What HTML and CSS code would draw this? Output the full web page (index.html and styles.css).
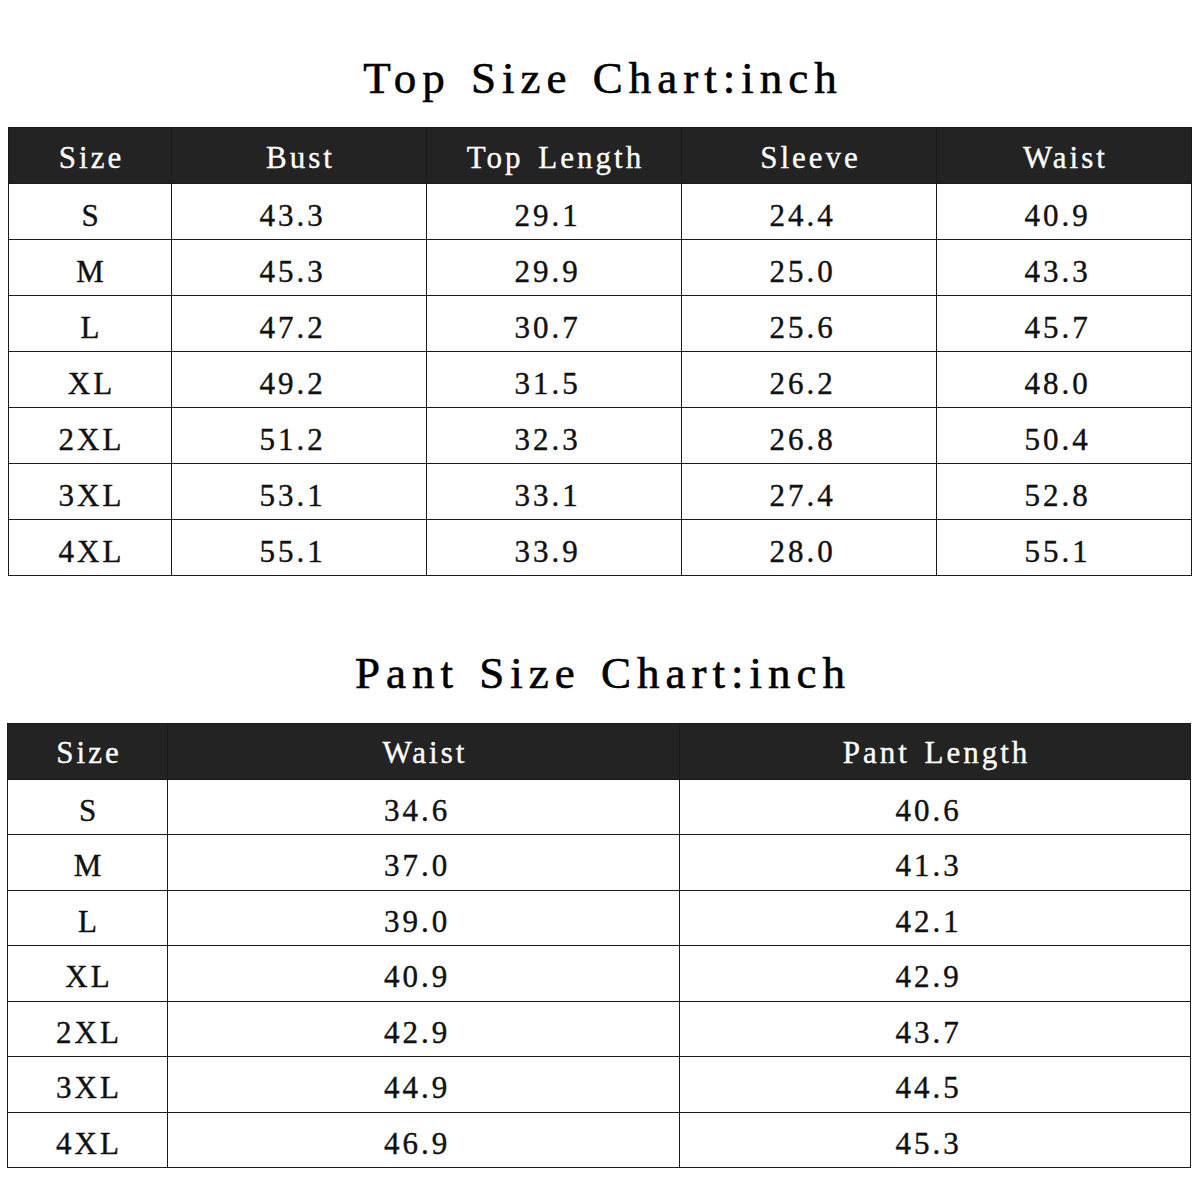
FILE: index.html
```html
<!DOCTYPE html>
<html>
<head>
<meta charset="utf-8">
<link rel="stylesheet" href="styles.css">
</head>
<body>
<section class="chart chart-top">
  <h1 class="title">Top Size Chart:inch</h1>
  <table class="grid grid-top">
    <colgroup><col class="c-size"><col><col><col><col></colgroup>
    <thead>
      <tr><th>Size</th><th>Bust</th><th>Top Length</th><th>Sleeve</th><th>Waist</th></tr>
    </thead>
    <tbody>
      <tr><td class="sz">S</td><td>43.3</td><td>29.1</td><td>24.4</td><td>40.9</td></tr>
      <tr><td class="sz">M</td><td>45.3</td><td>29.9</td><td>25.0</td><td>43.3</td></tr>
      <tr><td class="sz">L</td><td>47.2</td><td>30.7</td><td>25.6</td><td>45.7</td></tr>
      <tr><td class="sz">XL</td><td>49.2</td><td>31.5</td><td>26.2</td><td>48.0</td></tr>
      <tr><td class="sz">2XL</td><td>51.2</td><td>32.3</td><td>26.8</td><td>50.4</td></tr>
      <tr><td class="sz">3XL</td><td>53.1</td><td>33.1</td><td>27.4</td><td>52.8</td></tr>
      <tr><td class="sz">4XL</td><td>55.1</td><td>33.9</td><td>28.0</td><td>55.1</td></tr>
    </tbody>
  </table>
</section>
<section class="chart chart-pant">
  <h1 class="title">Pant Size Chart:inch</h1>
  <table class="grid grid-pant">
    <colgroup><col class="c-size-p"><col class="c-half"><col></colgroup>
    <thead>
      <tr><th>Size</th><th>Waist</th><th>Pant Length</th></tr>
    </thead>
    <tbody>
      <tr><td class="sz">S</td><td>34.6</td><td>40.6</td></tr>
      <tr><td class="sz">M</td><td>37.0</td><td>41.3</td></tr>
      <tr><td class="sz">L</td><td>39.0</td><td>42.1</td></tr>
      <tr><td class="sz">XL</td><td>40.9</td><td>42.9</td></tr>
      <tr><td class="sz">2XL</td><td>42.9</td><td>43.7</td></tr>
      <tr><td class="sz">3XL</td><td>44.9</td><td>44.5</td></tr>
      <tr><td class="sz">4XL</td><td>46.9</td><td>45.3</td></tr>
    </tbody>
  </table>
</section>
</body>
</html>
```
FILE: styles.css
```css
html, body {
  margin: 0;
  padding: 0;
  background: #ffffff;
}
body {
  font-family: "Liberation Serif", "Times New Roman", serif;
  color: #111111;
  width: 1200px;
}
.title {
  margin: 0;
  font-weight: normal;
  font-size: 45px;
  line-height: 60px;
  height: 60px;
  text-align: center;
  color: #000;
  letter-spacing: 6px;
  word-spacing: 3px;
  padding-left: 6px;
  -webkit-text-stroke: 0.6px #000;
}
.chart-top {
  padding-top: 48px;
}
.chart-top .title {
  margin-bottom: 19px;
}
.chart-pant {
  padding-top: 67px;
}
.chart-pant .title {
  margin-bottom: 20px;
}
.grid {
  border-collapse: collapse;
  table-layout: fixed;
}
.grid-top {
  width: 1184px;
  margin-left: 8px;
}
.grid-pant {
  width: 1184px;
  margin-left: 7px;
}
.c-size { width: 163px; }
.c-size-p { width: 160px; }
.c-half { width: 512px; }
.grid th, .grid td {
  border: 1px solid #1a1a1a;
  padding: 0;
  text-align: center;
  font-size: 31px;
  line-height: 34px;
  font-weight: normal;
  letter-spacing: 3px;
  word-spacing: 4px;
  -webkit-text-stroke: 0.4px currentColor;
}
.grid th {
  background: #232323;
  color: #ffffff;
  padding: 4px 0 0 3px;
  text-shadow: 0 0 1px #000;
}
.grid-top th { height: 51px; }
.grid-top td { height: 47px; }
.grid-pant th { height: 50.5px; }
.grid-pant td { height: 46.5px; }
.grid td {
  color: #111;
  padding: 8px 13px 0 0;
}
.grid td.sz {
  padding: 8px 0 0 3px;
}
```
